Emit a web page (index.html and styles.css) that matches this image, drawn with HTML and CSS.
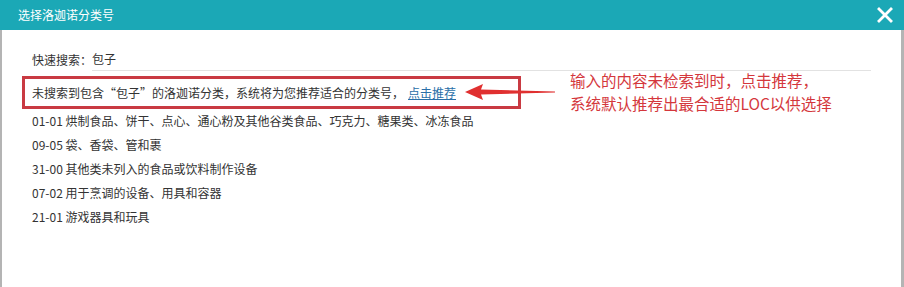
FILE: index.html
```html
<!DOCTYPE html>
<html lang="zh-CN">
<head>
<meta charset="utf-8">
<title>选择洛迦诺分类号</title>
<link rel="stylesheet" href="styles.css">
</head>
<body>
<div class="dialog">
  <div class="header">
    <span class="title">选择洛迦诺分类号</span>
    <svg class="close" width="16" height="16" viewBox="0 0 16 16"><path d="M2 2 L14 14 M14 2 L2 14" stroke="#fff" stroke-width="2.8" stroke-linecap="square"/></svg>
  </div>
  <div class="body">
    <div class="search">
      <span class="label">快速搜索：</span>
      <span class="input">包子</span>
    </div>
    <div class="notice">未搜索到包含“包子”的洛迦诺分类，系统将为您推荐适合的分类号，<a class="link">点击推荐</a></div>
    <ul class="list">
      <li>01-01 烘制食品、饼干、点心、通心粉及其他谷类食品、巧克力、糖果类、冰冻食品</li>
      <li>09-05 袋、香袋、管和裹</li>
      <li>31-00 其他类未列入的食品或饮料制作设备</li>
      <li>07-02 用于烹调的设备、用具和容器</li>
      <li>21-01 游戏器具和玩具</li>
    </ul>
    <svg class="arrow" width="92" height="20" viewBox="0 0 92 20"><path d="M0 10 L18 2 L16 7.5 L90 9.5 L90 10.5 L16 12.5 L18 18 Z" fill="#e03030"/></svg>
    <div class="annotation">输入的内容未检索到时，点击推荐，<br>系统默认推荐出最合适的LOC以供选择</div>
  </div>
</div>
</body>
</html>
```

FILE: styles.css
```css
html, body {
  margin: 0;
  padding: 0;
  background: #fff;
}
.dialog {
  width: 904px;
  height: 287px;
  font-family: "Noto Sans CJK SC", "Noto Sans", sans-serif;
  color: #333;
}
.header {
  height: 30px;
  background: #1ba8b6;
  display: flex;
  align-items: center;
  justify-content: space-between;
  padding: 0 11px 0 18px;
  box-sizing: border-box;
}
.title {
  color: #fff;
  font-size: 12px;
  line-height: 30px;
}
.close {
  display: block;
}
.body {
  position: relative;
  height: 257px;
  box-sizing: border-box;
  border-left: 2px solid #b4b4b4;
  border-right: 3px solid #b4b4b4;
  padding: 18px 30px 0 20px;
  font-size: 12px;
}
.search {
  display: flex;
  align-items: flex-end;
  padding-left: 10px;
  height: 23px;
}
.label {
  line-height: 22px;
}
.input {
  flex: 1;
  line-height: 22px;
  border-bottom: 1px solid #e2e2e2;
}
.notice {
  margin-top: 5px;
  width: 499px;
  height: 33px;
  box-sizing: border-box;
  border: 3px solid #c93a42;
  padding-left: 7px;
  line-height: 27px;
  white-space: nowrap;
}
.link {
  color: #2a6fa8;
  text-decoration: underline;
  margin-left: 4px;
}
.list {
  list-style: none;
  margin: 0;
  padding: 0 0 0 10px;
}
.list li {
  line-height: 24px;
}
.arrow {
  position: absolute;
  left: 463px;
  top: 52px;
}
.annotation {
  position: absolute;
  left: 568px;
  top: 39px;
  color: #d4373c;
  font-size: 15.5px;
  line-height: 23px;
  white-space: nowrap;
}
```
